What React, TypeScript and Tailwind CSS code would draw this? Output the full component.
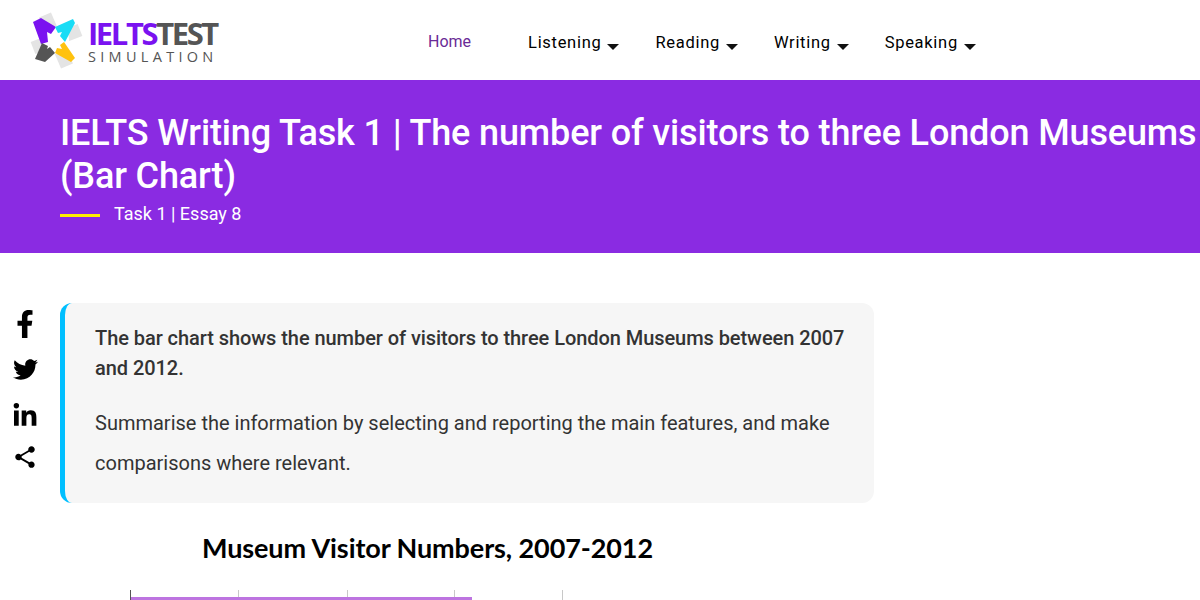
import { FaFacebookF, FaTwitter, FaLinkedinIn } from "react-icons/fa";
import { IoMdShare } from "react-icons/io";

function Logo() {
  return (
    <div className="flex w-[398px] shrink-0 items-center">
      <svg width="54" height="60" viewBox="30 10 54 60" className="shrink-0">
        <path d="M45 15 L67 66" stroke="#e4e4e4" strokeWidth="13" />
        <path d="M33 48 L80 30" stroke="#e4e4e4" strokeWidth="13" />
        <circle cx="55" cy="40" r="14" fill="#fff" />
        <path d="M33 22 L41 18 L56 27 L51 34 L47 32 L48 42 L41 44 Z" fill="#7a12f0" />
        <path d="M55 27 L73 19 L75 23 L65 42 L60 36 L62 32 L58 33 Z" fill="#19dcf5" />
        <path d="M64 42 L75 58 L71 62 L55 53 L57 48 L62 49 L60 45 Z" fill="#ffc20e" />
        <path d="M42 43 L35 59 L45 62 L55 53 L50 47 L47 49 L48 46 Z" fill="#555" />
      </svg>
      <div className="ml-[4px] flex flex-col" style={{ fontFamily: '"Open Sans", sans-serif' }}>
        <div className="mt-[3px] text-[31px] leading-[28px] font-bold tracking-[-2.4px] text-[#555]">
          <span className="text-[#7a12f0]">IELTS</span>TEST
        </div>
        <div className="mt-[1px] text-[14.5px] leading-[17px] tracking-[4.3px] text-[#555]">SIMULATION</div>
      </div>
    </div>
  );
}

function NavItem({ label, ml }: { label: string; ml: string }) {
  return (
    <div className={`flex items-center ${ml}`}>
      <span className="text-[16.5px] leading-5 tracking-[0.7px] text-black">{label}</span>
      <span className="mt-[7px] ml-[6px] h-0 w-0 border-x-[6px] border-t-[6px] border-x-transparent border-t-[#111]" />
    </div>
  );
}

export default function App() {
  return (
    <div className="h-[600px] w-[1200px] overflow-hidden bg-white" style={{ fontFamily: 'Roboto, sans-serif' }}>
      <header className="flex h-20 items-center pl-[30px]">
        <Logo />
        <nav className="mt-[6px] flex items-center">
          <span className="-mt-[3px] text-base leading-5 text-[#6a2a96]">Home</span>
          <NavItem label="Listening" ml="ml-[57px]" />
          <NavItem label="Reading" ml="ml-[36px]" />
          <NavItem label="Writing" ml="ml-[36px]" />
          <NavItem label="Speaking" ml="ml-[36px]" />
        </nav>
      </header>

      <section className="h-[173px] bg-[#8a2be2] pt-[32px] pl-[60px] text-white">
        <h1 className="text-[36px] leading-[43px] font-medium tracking-[-0.14px] whitespace-nowrap">
          IELTS Writing Task 1 | The number of visitors to three London Museums
          <br />
          (Bar Chart)
        </h1>
        <div className="mt-[3px] flex items-center">
          <span className="mt-[3px] h-[3px] w-10 bg-[#ffee00]" />
          <span className="ml-[14px] text-lg leading-[26px] text-white">Task 1 | Essay 8</span>
        </div>
      </section>

      <div className="flex pt-[50px]">
        <aside className="flex w-[60px] shrink-0 flex-col items-center pr-[10px] pt-[7px] text-black">
          <FaFacebookF className="h-[28px] w-[28px]" />
          <FaTwitter className="mt-[19px] h-[25px] w-[25px]" />
          <FaLinkedinIn className="mt-[21px] h-[26px] w-[26px]" />
          <IoMdShare className="mt-[15px] h-[26px] w-[26px]" />
        </aside>
        <main className="w-[814px]">
          <div className="h-[200px] rounded-xl border-l-[5px] border-[#00bfff] bg-[#f6f6f6] pt-5 pl-[30px]">
            <p className="pr-6 text-[20px] leading-[30px] font-medium tracking-[-0.06px] text-[#333]">
              The bar chart shows the number of visitors to three London Museums between 2007 and 2012.
            </p>
            <p className="mt-[20px] pr-6 text-[20px] leading-10 text-[#333]">
              Summarise the information by selecting and reporting the main features, and make comparisons where relevant.
            </p>
          </div>
          <div
            className="mt-[27px] ml-[142px] text-[27px] leading-9 font-bold tracking-[-0.1px] whitespace-nowrap text-black"
            style={{ fontFamily: 'Lato, sans-serif' }}
          >
            Museum Visitor Numbers, 2007-2012
          </div>
          <svg width="520" height="16" viewBox="0 0 520 16" className="mt-[18px] ml-[60px] block">
            <path d="M10.5 6V16" stroke="#555" />
            <path d="M118.5 6V16M227.5 6V16M334.5 6V16M442.5 6V16" stroke="#c8c8c8" />
            <rect x="11" y="13" width="341" height="3" fill="#bd74e0" />
          </svg>
        </main>
      </div>
    </div>
  );
}
